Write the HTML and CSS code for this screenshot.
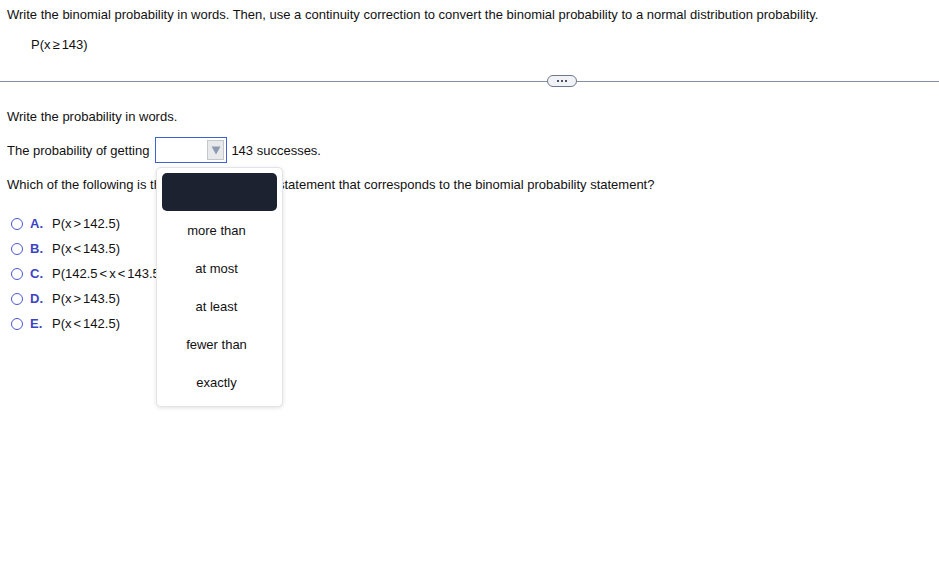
FILE: index.html
```html
<!DOCTYPE html>
<html>
<head>
<meta charset="utf-8">
<link rel="stylesheet" href="styles.css">
</head>
<body>
<div class="page">
  <p class="intro">Write the binomial probability in words. Then, use a continuity correction to convert the binomial probability to a normal distribution probability.</p>
  <p class="expr">P(x<span class="op">≥</span>143)</p>
  <div class="divider">
    <span class="line"></span>
    <span class="pill"><span class="dot"></span><span class="dot"></span><span class="dot"></span></span>
    <span class="line"></span>
  </div>
  <p class="q">Write the probability in words.</p>
  <div class="row">
    <span>The probability of getting</span>
    <span class="select"><span class="arrow"><svg width="10" height="9" viewBox="0 0 10 9"><path d="M0.5 0.5 H9.5 L5 8.5 Z" fill="#8d9bb1"/></svg></span></span>
    <span>143 successes.</span>
  </div>
  <p class="q2">Which of the following is the normal probability statement that corresponds to the binomial probability statement?</p>
  <ul class="options">
    <li><span class="radio"></span><span class="letter">A.</span><span>P(x<span class="op">&gt;</span>142.5)</span></li>
    <li><span class="radio"></span><span class="letter">B.</span><span>P(x<span class="op">&lt;</span>143.5)</span></li>
    <li><span class="radio"></span><span class="letter">C.</span><span>P(142.5<span class="op">&lt;</span>x<span class="op">&lt;</span>143.5)</span></li>
    <li><span class="radio"></span><span class="letter">D.</span><span>P(x<span class="op">&gt;</span>143.5)</span></li>
    <li><span class="radio"></span><span class="letter">E.</span><span>P(x<span class="op">&lt;</span>142.5)</span></li>
  </ul>
  <div class="menu">
    <div class="selected"></div>
    <div class="item">more than</div>
    <div class="item">at most</div>
    <div class="item">at least</div>
    <div class="item">fewer than</div>
    <div class="item">exactly</div>
  </div>
</div>
</body>
</html>
```
FILE: styles.css
```css
html, body {
  margin: 0;
  padding: 0;
  background: #fff;
}
body {
  font-family: "Liberation Sans", Arial, sans-serif;
  font-size: 13px;
  color: #111;
}
.page {
  position: relative;
  padding-top: 7px;
  min-height: 564px;
}
p {
  margin: 0;
  line-height: 16px;
}
.intro {
  padding-left: 7px;
}
.expr {
  margin-top: 14px;
  padding-left: 31px;
}
.op {
  padding: 0 2px;
}
.divider {
  margin-top: 22px;
  height: 12px;
  display: flex;
  align-items: center;
}
.divider .line {
  height: 1px;
  background: #8390a3;
}
.divider .line:first-child {
  width: 547px;
}
.divider .line:last-child {
  flex: 1;
}
.pill {
  width: 28px;
  height: 10px;
  border: 1px solid #6c788b;
  border-radius: 6px;
  background: #f1f3f6;
  display: flex;
  align-items: center;
  justify-content: center;
  gap: 2px;
}
.dot {
  width: 2px;
  height: 2px;
  background: #4a5363;
}
.q {
  margin-top: 22px;
  padding-left: 7px;
}
.row {
  margin-top: 12px;
  padding-left: 7px;
  display: flex;
  align-items: center;
  height: 26px;
}
.select {
  margin-left: 6px;
  margin-right: 4px;
  width: 68px;
  height: 24px;
  border: 1px solid #3e63d0;
  display: flex;
  align-items: center;
  justify-content: flex-end;
  padding-right: 2px;
}
.arrow {
  width: 15px;
  height: 18px;
  background: #e8e9eb;
  border: 1px solid #c3c6cb;
  display: flex;
  align-items: center;
  justify-content: center;
}
.arrow svg {
  display: block;
}
.q2 {
  margin-top: 14px;
  padding-left: 7px;
}
.options {
  list-style: none;
  margin: 18px 0 0;
  padding: 0 0 0 11px;
}
.options li {
  height: 25px;
  display: flex;
  align-items: center;
}
.radio {
  width: 10px;
  height: 10px;
  border: 1.5px solid #4a58d6;
  border-radius: 50%;
  margin-right: 7px;
}
.letter {
  font-weight: bold;
  color: #3b45c4;
  width: 22px;
}
.menu {
  position: absolute;
  left: 156px;
  top: 167px;
  width: 115px;
  padding: 5px;
  background: #fff;
  border: 1px solid #e2e4e8;
  border-radius: 5px;
  box-shadow: 0 1px 4px rgba(0,0,0,0.12);
}
.selected {
  height: 38px;
  margin-bottom: 1px;
  background: #1d2230;
  border-radius: 5px;
}
.item {
  height: 38px;
  line-height: 38px;
  text-align: center;
  padding-right: 6px;
}
.menu .item:last-child {
  height: 37px;
}
```
